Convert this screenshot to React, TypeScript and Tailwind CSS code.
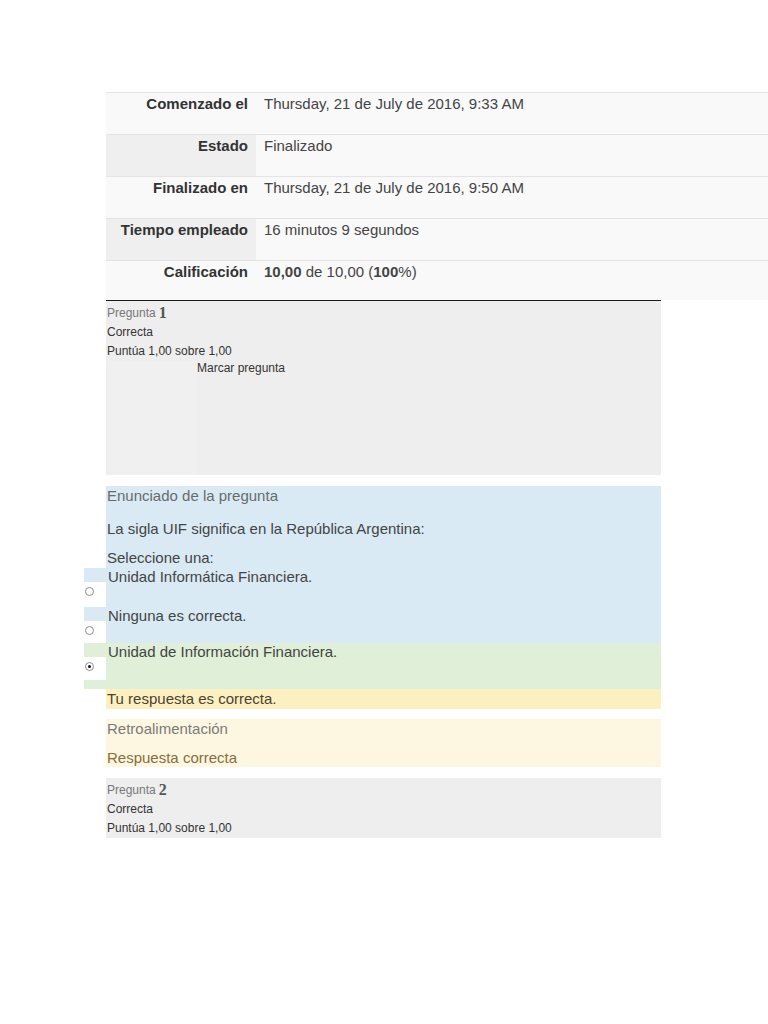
import type { ReactNode } from 'react';

// Attempt summary rows: label, value, and whether the label cell is shaded
const summary: { label: string; value: ReactNode; shaded: boolean }[] = [
  { label: 'Comenzado el', value: 'Thursday, 21 de July de 2016, 9:33 AM', shaded: false },
  { label: 'Estado', value: 'Finalizado', shaded: true },
  { label: 'Finalizado en', value: 'Thursday, 21 de July de 2016, 9:50 AM', shaded: false },
  { label: 'Tiempo empleado', value: '16 minutos 9 segundos', shaded: true },
  {
    label: 'Calificación',
    value: (
      <>
        <b>10,00</b> de 10,00 (<b>100</b>%)
      </>
    ),
    shaded: false,
  },
];

function Radio({ checked }: { checked?: boolean }) {
  return (
    <span className="flex items-center justify-center w-[9px] h-[9px] rounded-full border border-[#8a8a8a] bg-white">
      {checked && <span className="w-[3px] h-[3px] rounded-full bg-[#111]" />}
    </span>
  );
}

interface OptionProps {
  text: string;
  checked?: boolean;
  height: string;
  stripClass: string;
  rowClass: string;
  white: string;
}

function Option({ text, checked, height, stripClass, rowClass, white }: OptionProps) {
  return (
    <div className={`flex -ml-[22px] ${height}`}>
      {/* left gutter with radio */}
      <div className="flex flex-col w-[22px] shrink-0">
        <div className={`h-[14px] ${stripClass}`} />
        <div className={`bg-white pl-[1px] pt-[5px] ${white}`}>
          <Radio checked={checked} />
        </div>
        <div className={`flex-1 ${stripClass}`} />
      </div>
      <div className={`flex-1 pl-[2px] text-[15px] leading-[18px] text-[#444] ${rowClass}`}>{text}</div>
    </div>
  );
}

function QuestionInfo({ n, children }: { n: number; children?: ReactNode }) {
  return (
    <div className="bg-[#eeeeee] pl-[1px] text-[12px] text-[#333]">
      <div className="h-[22px] flex items-end leading-[20px]">
        <span className="text-[#777]">Pregunta</span>
        <span className="ml-[3px] text-[16px] font-bold text-[#555] font-['Liberation_Serif',serif]">{n}</span>
      </div>
      <div className="leading-[19px]">Correcta</div>
      <div className="leading-[19px]">Puntúa 1,00 sobre 1,00</div>
      {children}
    </div>
  );
}

export default function App() {
  return (
    <div className="min-h-[1024px] bg-white pt-[92px] pl-[106px] font-['Liberation_Sans',Arial,sans-serif]">
      {/* attempt summary */}
      <div className="w-[662px] text-[15px] text-[#444]">
        {summary.map((row, i) => (
          <div
            key={row.label}
            className={`flex border-t border-[#e4e4e4] bg-[#f9f9f9] ${i === summary.length - 1 ? 'h-[40px]' : 'h-[42px]'}`}
          >
            <div
              className={`w-[150px] shrink-0 pr-[8px] pt-[1px] leading-[20px] text-right font-bold text-[#333] ${
                row.shaded ? 'bg-[#efefef]' : ''
              }`}
            >
              {row.label}
            </div>
            <div className="flex-1 pl-[8px] pt-[1px] leading-[20px]">{row.value}</div>
          </div>
        ))}
      </div>

      <div className="w-[555px]">
        <div className="h-[1px] bg-[#1a1a1a]" />

        {/* question 1 */}
        <QuestionInfo n={1}>
          <div className="flex h-[114px]">
            <div className="w-[90px] bg-[#f0f0f0]" />
            <div className="leading-[14px]">Marcar pregunta</div>
          </div>
        </QuestionInfo>

        <div className="mt-[11px] bg-[#d9eaf4]">
          <div className="pl-[1px] text-[15px] leading-[20px] text-[#6a6a6a]">Enunciado de la pregunta</div>
          <div className="pl-[1px] mt-[13px] text-[15px] leading-[20px] text-[#444]">
            La sigla UIF significa en la República Argentina:
          </div>
          <div className="pl-[1px] mt-[9px] text-[15px] leading-[20px] text-[#444]">Seleccione una:</div>
          <Option
            text="Unidad Informática Financiera."
            height="h-[39px]"
            stripClass="bg-[#d9eaf4]"
            rowClass=""
            white="h-[25px]"
          />
          <Option
            text="Ninguna es correcta."
            height="h-[36px]"
            stripClass="bg-[#d9eaf4]"
            rowClass=""
            white="h-[22px]"
          />
          <Option
            text="Unidad de Información Financiera."
            checked
            height="h-[46px]"
            stripClass="bg-[#dfefd8]"
            rowClass="bg-[#dfefd8]"
            white="h-[23px]"
          />
        </div>

        <div className="bg-[#fdf0c0] pl-[1px] text-[15px] leading-[20px] text-[#4a4232]">Tu respuesta es correcta.</div>

        <div className="mt-[10px] bg-[#fdf7e2] h-[48px] pl-[1px] text-[15px] leading-[20px]">
          <div className="text-[#7a7a7a]">Retroalimentación</div>
          <div className="mt-[9px] text-[#8a6d3b]">Respuesta correcta</div>
        </div>

        {/* question 2 */}
        <div className="mt-[11px]">
          <QuestionInfo n={2} />
        </div>
      </div>
    </div>
  );
}
